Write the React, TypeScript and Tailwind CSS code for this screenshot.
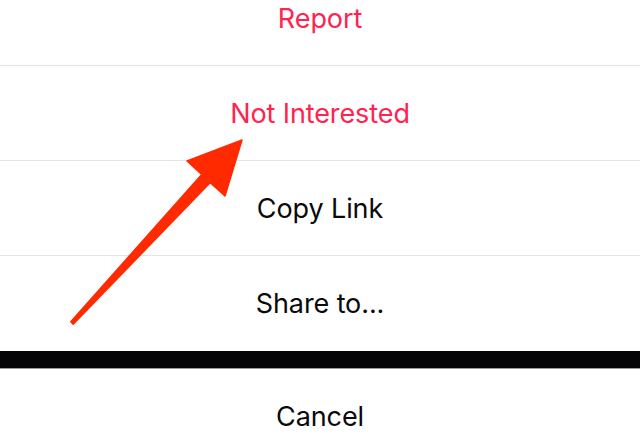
const rows = [
  { label: "Report", danger: true },
  { label: "Not Interested", danger: true },
  { label: "Copy Link", danger: false },
  { label: "Share to...", danger: false },
];

function Arrow() {
  return (
    <svg
      className="pointer-events-none absolute left-0 top-0"
      width={640}
      height={437}
      viewBox="0 0 640 437"
    >
      <polygon
        points="242,140 225,196 210.3,182.6 73.2,324.2 70.8,321.8 201.7,174.4 187,161"
        fill="#ff2a00"
        stroke="#ff2a00"
        strokeWidth={1.5}
        strokeLinejoin="round"
      />
    </svg>
  );
}

export default function App() {
  return (
    <div
      className="relative h-[437px] w-[640px] overflow-hidden bg-white"
      style={{ fontFamily: "Inter, 'Liberation Sans', sans-serif" }}
    >
      <div className="-mt-[29px] flex flex-col">
        {rows.map((row, i) => (
          <div
            key={row.label}
            className={`flex h-[95px] items-center justify-center pt-[2px] text-[27px] tracking-[-0.1px] ${
              i < rows.length - 1 ? "border-b border-[#e4e4e4]" : ""
            } ${row.danger ? "text-[#ff2350]" : "text-[#0a0a0a]"}`}
          >
            {row.label}
          </div>
        ))}
        <div className="h-[18px] border-b border-[#9a9a9a] bg-[#050507]" />
        <div className="flex h-[95px] items-center justify-center pt-[2px] text-[27px] tracking-[-0.1px] text-[#0a0a0a]">
          Cancel
        </div>
      </div>
      <Arrow />
    </div>
  );
}
